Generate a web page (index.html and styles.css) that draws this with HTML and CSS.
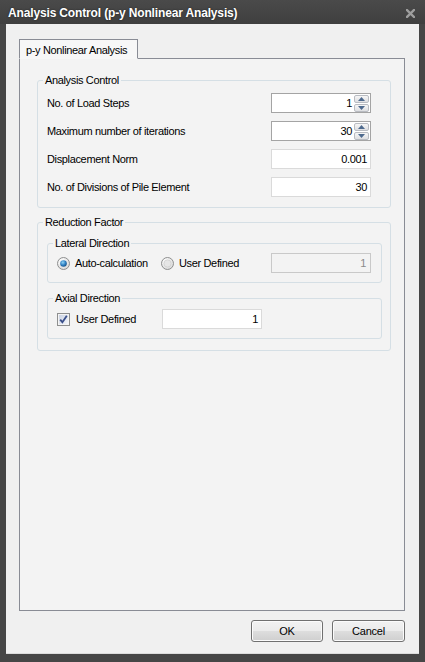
FILE: index.html
```html
<!DOCTYPE html>
<html lang="en">
<head>
<meta charset="utf-8">
<title>Analysis Control (p-y Nonlinear Analysis)</title>
<link rel="stylesheet" href="styles.css">
</head>
<body>
<div class="window">
  <div class="titlebar">
    <span class="title">Analysis Control (p-y Nonlinear Analysis)</span>
    <svg class="close" width="9" height="9" viewBox="0 0 9 9"><path d="M1 1 L8 8 M8 1 L1 8" stroke="#9e9e9e" stroke-width="2.4" stroke-linecap="square"/></svg>
  </div>
  <div class="client">
    <div class="tabstrip">
      <div class="tab">p-y Nonlinear Analysis</div>
    </div>
    <div class="panel">
      <fieldset class="group ac">
        <legend>Analysis Control</legend>
        <div class="rows">
          <div class="row">
            <span class="label">No. of Load Steps</span>
            <div class="field spin"><span class="val">1</span>
              <span class="spinbtns">
                <span class="sb"><svg width="7" height="4" viewBox="0 0 7 4"><path d="M0 4 L3.5 0 L7 4Z" fill="#4e6a8e"/></svg></span>
                <span class="sb"><svg width="7" height="4" viewBox="0 0 7 4"><path d="M0 0 L3.5 4 L7 0Z" fill="#4e6a8e"/></svg></span>
              </span>
            </div>
          </div>
          <div class="row">
            <span class="label">Maximum number of iterations</span>
            <div class="field spin"><span class="val">30</span>
              <span class="spinbtns">
                <span class="sb"><svg width="7" height="4" viewBox="0 0 7 4"><path d="M0 4 L3.5 0 L7 4Z" fill="#4e6a8e"/></svg></span>
                <span class="sb"><svg width="7" height="4" viewBox="0 0 7 4"><path d="M0 0 L3.5 4 L7 0Z" fill="#4e6a8e"/></svg></span>
              </span>
            </div>
          </div>
          <div class="row">
            <span class="label">Displacement Norm</span>
            <div class="field plain"><span class="val">0.001</span></div>
          </div>
          <div class="row">
            <span class="label">No. of Divisions of Pile Element</span>
            <div class="field plain"><span class="val">30</span></div>
          </div>
        </div>
      </fieldset>

      <fieldset class="group rf">
        <legend>Reduction Factor</legend>
        <fieldset class="group sub lateral">
          <legend>Lateral Direction</legend>
          <div class="row">
            <span class="opt opt-auto">
              <svg class="radio" width="13" height="13" viewBox="0 0 13 13">
                <defs>
                  <radialGradient id="rbg" cx="0.35" cy="0.3" r="0.8"><stop offset="0" stop-color="#ffffff"/><stop offset="1" stop-color="#d6d6d6"/></radialGradient>
                  <radialGradient id="rdot" cx="0.4" cy="0.35" r="0.7"><stop offset="0" stop-color="#8fd3f5"/><stop offset="0.6" stop-color="#2b7cc0"/><stop offset="1" stop-color="#194f80"/></radialGradient>
                </defs>
                <circle cx="6.5" cy="6.5" r="6" fill="url(#rbg)" stroke="#8e8f8f"/>
                <circle cx="6.5" cy="6.5" r="3.3" fill="url(#rdot)"/>
              </svg>
              <span>Auto-calculation</span>
            </span>
            <span class="opt">
              <svg class="radio" width="13" height="13" viewBox="0 0 13 13">
                <circle cx="6.5" cy="6.5" r="6" fill="url(#rbg)" stroke="#8e8f8f"/>
                <circle cx="6.5" cy="6.5" r="3.6" fill="#e6e6e6" stroke="#cfcfcf" stroke-width="0.8"/>
              </svg>
              <span>User Defined</span>
            </span>
            <div class="field disabled"><span class="val">1</span></div>
          </div>
        </fieldset>
        <fieldset class="group sub axial">
          <legend>Axial Direction</legend>
          <div class="row">
            <span class="opt opt-check">
              <svg class="check" width="13" height="13" viewBox="0 0 13 13">
                <defs>
                  <linearGradient id="cbg" x1="0" y1="0" x2="1" y2="1"><stop offset="0" stop-color="#cbd3e3"/><stop offset="1" stop-color="#f4f6fa"/></linearGradient>
                </defs>
                <rect x="0.5" y="0.5" width="12" height="12" fill="#f4f4f4" stroke="#8e8f8f"/>
                <rect x="2" y="2" width="9" height="9" fill="url(#cbg)"/>
                <path d="M3.2 6.6 L5.4 9.2 L9.8 2.8" fill="none" stroke="#3a4f8a" stroke-width="1.8"/>
              </svg>
              <span>User Defined</span>
            </span>
            <div class="field plain"><span class="val">1</span></div>
          </div>
        </fieldset>
      </fieldset>
    </div>
    <div class="buttons">
      <button class="btn ok" type="button">OK</button>
      <button class="btn cancel" type="button">Cancel</button>
    </div>
  </div>
</div>
</body>
</html>
```

FILE: styles.css
```css
* { box-sizing: border-box; }

html, body {
  margin: 0;
  padding: 0;
  background: #474747;
}

body {
  font-family: "Liberation Sans", Arial, sans-serif;
  font-size: 11px;
  letter-spacing: -0.35px;
  color: #000;
}

.window {
  width: 425px;
  height: 662px;
  background: #464646;
  display: flex;
  flex-direction: column;
  padding: 0 6px 8px 6px;
}

.titlebar {
  height: 24px;
  display: flex;
  align-items: center;
  justify-content: space-between;
  padding: 1px 4px 0 2px;
  background: linear-gradient(#4a4a4a, #3f3f3f);
  margin: 0 -6px;
  padding-left: 8px;
  padding-right: 10px;
}

.title {
  color: #ffffff;
  font-weight: bold;
  font-size: 12px;
  letter-spacing: -0.15px;
  text-shadow: 0 0 2px rgba(0,0,0,0.6);
}

.close { display: block; margin-top: 1px; }

.client {
  flex: 1;
  background: #f0f0f0;
  padding: 15px 14px 0 13px;
  display: flex;
  flex-direction: column;
  border-bottom: 1px solid #dcdcdc;
}

.tabstrip {
  display: flex;
}

.tab {
  position: relative;
  z-index: 1;
  width: 119px;
  height: 20px;
  border: 1px solid #898c95;
  border-bottom: 1px solid #f7f7f7;
  background: #f7f7f7;
  padding: 3px 0 0 6px;
  margin-bottom: -1px;
  line-height: 14px;
  white-space: nowrap;
}

.panel {
  width: 386px;
  height: 553px;
  border: 1px solid #898c95;
  background: #f3f3f3;
  padding: 0 13px 0 17px;
}

.group {
  margin: 0;
  border: 1px solid #d5dfe5;
  border-radius: 3px;
  min-width: 0;
}

.group legend {
  padding: 0 2px;
  margin-left: -4px;
  line-height: 14px;
  font-size: 11px;
}

.ac {
  margin-top: 14px;
  padding: 6px 19px 10px 9px;
}

.rows {
  display: flex;
  flex-direction: column;
  gap: 8px;
}

.row {
  display: flex;
  align-items: center;
  height: 20px;
}

.label { flex: 1; white-space: nowrap; }

.field {
  width: 100px;
  height: 20px;
  display: flex;
  align-items: center;
  justify-content: flex-end;
  background: #ffffff;
  line-height: 14px;
}

.field.plain {
  border: 1px solid #dadada;
  padding-right: 3px;
}

.field.spin {
  border: 1px solid #a4a4a4;
  padding-right: 1px;
}

.field.spin .val { margin-right: 2px; }

.spinbtns {
  display: flex;
  flex-direction: column;
  gap: 1px;
  width: 15px;
  height: 17px;
}

.sb {
  flex: 1;
  display: flex;
  align-items: center;
  justify-content: center;
  border: 1px solid #b9bcc2;
  border-radius: 2px;
  background: linear-gradient(#f6f6f6, #dedfe2);
}

.sb svg { display: block; }

.rf {
  margin-top: 7px;
  padding: 7px 8px 11px 9px;
}

.sub.lateral {
  padding: 3px 10px 9px 9px;
}

.sub.axial {
  margin-top: 8px;
  padding: 4px 10px 9px 9px;
}

.opt {
  display: flex;
  align-items: center;
  gap: 5px;
  white-space: nowrap;
}

.opt svg { display: block; flex: none; }

.opt-auto { width: 104px; }

.opt-check { width: 105px; gap: 6px; }

.field.disabled {
  margin-left: auto;
  background: #f3f3f3;
  border: 1px solid #c9c9c9;
  color: #8a8a8a;
  padding-right: 4px;
}

.buttons {
  display: flex;
  justify-content: flex-end;
  gap: 9px;
  margin-top: 9px;
}

.btn {
  height: 22px;
  font-family: "Liberation Sans", Arial, sans-serif;
  font-size: 11px;
  letter-spacing: -0.2px;
  color: #000;
  border: 1px solid #707070;
  border-radius: 3px;
  background: linear-gradient(#f2f2f2 0%, #ebebeb 48%, #dddddd 52%, #cfcfcf 100%);
  box-shadow: inset 0 0 0 1px #fbfbfb;
  padding: 0;
}

.btn.ok { width: 72px; }
.btn.cancel { width: 73px; }
```
